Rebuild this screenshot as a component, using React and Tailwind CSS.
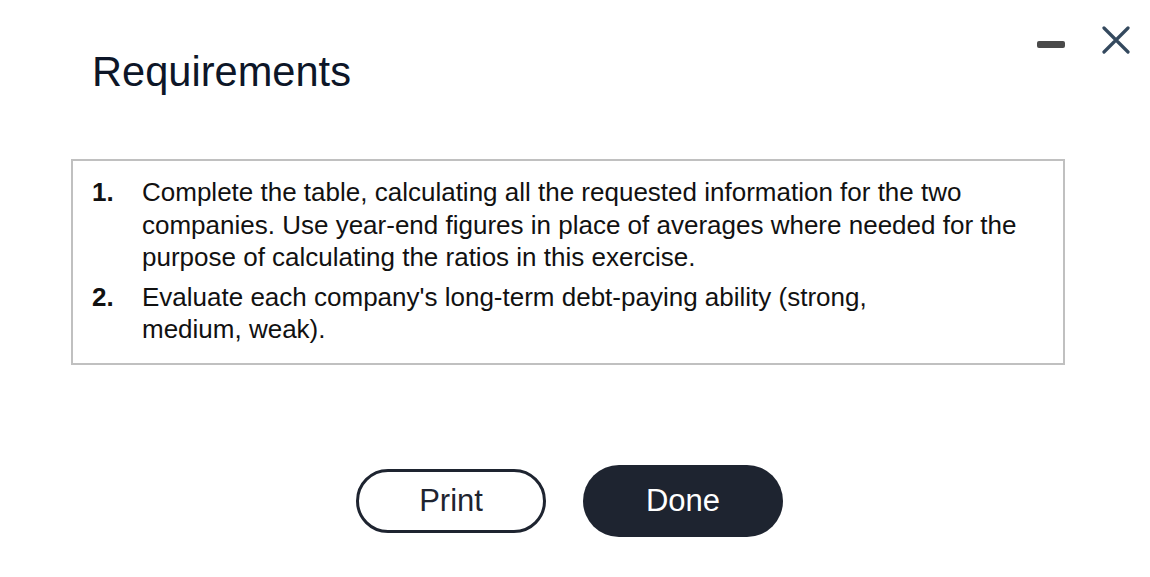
export default function App() {
  const font = { fontFamily: '"Liberation Sans", Arial, Helvetica, sans-serif' };
  return (
    <div className="w-[1150px] h-[577px] bg-white relative" style={font}>
      <div className="absolute top-[26px] right-[20px] flex items-start gap-[37px]">
        <div className="mt-[15px] w-[28px] h-[7px] rounded-[2px] bg-[#4a4a4a]" />
        <svg width="28" height="28" viewBox="0 0 28 28">
          <path d="M2 2 L26 26 M26 2 L2 26" stroke="#34495e" strokeWidth="3.2" strokeLinecap="round" />
        </svg>
      </div>
      <div className="pt-[49px] pl-[92px]">
        <h1 className="text-[41.6px] leading-[46px] text-[#0d1628]">Requirements</h1>
      </div>
      <div className="ml-[71px] mt-[64px] w-[994px] h-[206px] border-2 border-[#c0c0c0] pt-[15px] pl-[19px]">
        <ol className="text-[26px] leading-[32.5px] text-[#111]">
          <li className="flex">
            <span className="w-[50px] shrink-0 font-bold">1.</span>
            <span className="w-[890px]">Complete the table, calculating all the requested information for the two companies. Use year-end figures in place of averages where needed for the purpose of calculating the ratios in this exercise.</span>
          </li>
          <li className="flex mt-[7px]">
            <span className="w-[50px] shrink-0 font-bold">2.</span>
            <span className="w-[745px]">Evaluate each company's long-term debt-paying ability (strong, medium, weak).</span>
          </li>
        </ol>
      </div>
      <div className="flex items-center justify-center gap-[37px] mt-[100px] pr-[11px]">
        <button className="w-[190px] h-[64px] rounded-full border-[3px] border-[#1e2430] bg-white text-[31px] text-[#1e2430]">Print</button>
        <button className="w-[200px] h-[72px] rounded-full bg-[#1e2430] text-white text-[31px]">Done</button>
      </div>
    </div>
  );
}
